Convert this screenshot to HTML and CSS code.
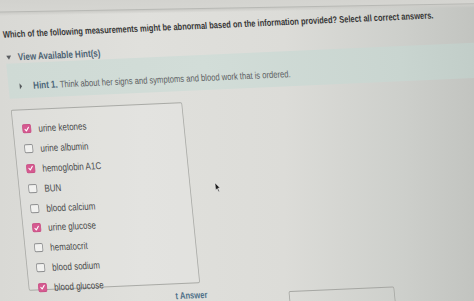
FILE: index.html
```html
<!DOCTYPE html>
<html lang="en">
<head>
<meta charset="utf-8">
<title>Question</title>
<link rel="stylesheet" href="styles.css">
</head>
<body>
<div class="page">
  <p class="question">Which of the following measurements might be abnormal based on the information provided? Select all correct answers.</p>
  <div class="hint-toggle"><span class="caret-down"></span>View Available Hint(s)</div>
  <div class="hint-panel"><span class="caret-right"></span><b class="hint-label">Hint 1.</b>&nbsp;Think about her signs and symptoms and blood work that is ordered.</div>
  <div class="answer-box">
    <label class="opt"><span class="cb checked"><svg viewBox="0 0 10 10"><path d="M2.2 5.2 L4.2 7.2 L7.8 2.8" /></svg></span>urine ketones</label>
    <label class="opt"><span class="cb"></span>urine albumin</label>
    <label class="opt"><span class="cb checked"><svg viewBox="0 0 10 10"><path d="M2.2 5.2 L4.2 7.2 L7.8 2.8" /></svg></span>hemoglobin A1C</label>
    <label class="opt"><span class="cb"></span>BUN</label>
    <label class="opt"><span class="cb"></span>blood calcium</label>
    <label class="opt"><span class="cb checked"><svg viewBox="0 0 10 10"><path d="M2.2 5.2 L4.2 7.2 L7.8 2.8" /></svg></span>urine glucose</label>
    <label class="opt"><span class="cb"></span>hematocrit</label>
    <label class="opt"><span class="cb"></span>blood sodium</label>
    <label class="opt"><span class="cb checked"><svg viewBox="0 0 10 10"><path d="M2.2 5.2 L4.2 7.2 L7.8 2.8" /></svg></span>blood glucose</label>
  </div>
  <div class="actions">
    <span class="request"><span class="fade">Reques</span>t Answer</span>
    <div class="next-box"></div>
  </div>
  <svg class="cursor" viewBox="0 0 10 14"><path d="M1 1 L1 11 L3.6 8.6 L5.4 12.6 L7 11.9 L5.3 8 L8.6 8 Z" /></svg>
</div>
</body>
</html>
```
FILE: styles.css
```css
html, body {
  margin: 0;
  padding: 0;
}
body {
  width: 474px;
  height: 301px;
  overflow: hidden;
  font-family: "Liberation Sans", Arial, sans-serif;
  background:
    linear-gradient(179deg, #d2d2ce 0, #d5d5d1 11px, #b8b9b5 12px, #cdcdc9 13px, rgba(0,0,0,0) 16px),
    linear-gradient(90deg, #d9d9d5 0%, #e0e0dc 30%, #dcdcd8 60%, #cdcfcb 85%, #c2c4c0 100%);
}
.page {
  position: relative;
  width: 620px;
  padding-left: 5.5px;
  box-sizing: border-box;
  transform-origin: 0 0;
  transform: matrix(0.8, -0.036, 0.1, 1, -5, 0);
}
.question {
  margin: 0;
  padding-top: 29px;
  font-size: 9.4px;
  line-height: 12px;
  font-weight: bold;
  color: #383838;
  white-space: nowrap;
}
.hint-toggle {
  margin-top: 11px;
  display: flex;
  align-items: center;
  font-size: 10px;
  line-height: 12px;
  font-weight: bold;
  color: #4d6373;
}
.caret-down {
  width: 0;
  height: 0;
  margin: 0 9px 0 1px;
  border-left: 3.5px solid transparent;
  border-right: 3.5px solid transparent;
  border-top: 4px solid #5a5d60;
}
.hint-panel {
  margin: 0 0 0 0.5px;
  height: 35px;
  box-sizing: border-box;
  padding: 17px 0 6px 14px;
  display: flex;
  align-items: center;
  font-size: 9.5px;
  line-height: 12px;
  color: #5d6163;
  white-space: nowrap;
  background: linear-gradient(90deg, #cfdad5 0%, #d2ddd8 40%, #c9d5d0 80%, #bfcbc6 100%);
}
.caret-right {
  width: 0;
  height: 0;
  margin-right: 14px;
  border-top: 3px solid transparent;
  border-bottom: 3px solid transparent;
  border-left: 3.5px solid #55595c;
}
.hint-label {
  color: #4b6678;
  font-size: 10px;
}
.answer-box {
  margin: 11px 0 0 0.5px;
  width: 214px;
  height: 181px;
  box-sizing: border-box;
  padding: 9px 0 0 11px;
  border: 1px solid #a9aaa6;
  border-radius: 2px;
  background: rgba(255, 255, 255, 0.12);
}
.opt {
  display: flex;
  align-items: center;
  height: 19.8px;
  font-size: 10px;
  color: #4a4b4c;
  white-space: nowrap;
}
.cb {
  flex: none;
  width: 11px;
  height: 9px;
  margin-right: 9px;
  box-sizing: border-box;
  border: 1px solid #8d8e8f;
  border-radius: 2px;
  background: #f1f1ef;
  display: flex;
  align-items: center;
  justify-content: center;
}
.cb.checked {
  border-color: #c94f84;
  background: #d65a91;
}
.cb svg {
  width: 9px;
  height: 8px;
}
.cb svg path {
  fill: none;
  stroke: #ffffff;
  stroke-width: 1.6;
  stroke-linecap: round;
  stroke-linejoin: round;
}
.actions {
  display: flex;
  align-items: flex-start;
  margin-top: 6px;
}
.request {
  margin-left: 148px;
  font-size: 9.5px;
  line-height: 12px;
  font-weight: bold;
  color: #4f7189;
}
.fade {
  color: rgba(79, 113, 137, 0);
}
.next-box {
  margin: 6px 159px 0 auto;
  width: 130px;
  height: 30px;
  border: 1px solid #a6a7a3;
  border-radius: 2px;
}
.cursor {
  position: absolute;
  left: 250px;
  top: 191px;
  width: 8px;
  height: 11px;
}
.cursor path {
  fill: #1e1e1e;
  stroke: #f4f4f4;
  stroke-width: 0.8;
}
```
